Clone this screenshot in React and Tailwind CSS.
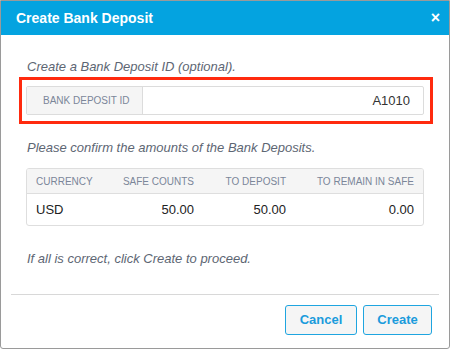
export default function App() {
  const rows = [{ currency: 'USD', safe: '50.00', deposit: '50.00', remain: '0.00' }];

  return (
    <div className="w-[450px] h-[349px] bg-white font-['Liberation_Sans',Arial,sans-serif]">
      <div className="flex flex-col h-full border border-[#9a9a9a] rounded-b-[3px] overflow-hidden">
        <div className="flex items-center justify-between h-[34px] bg-[#04a3e0] pl-[15px] pr-[9px]">
          <h1 className="text-[14px] font-bold text-white">Create Bank Deposit</h1>
          <button className="text-white text-[16px] font-bold leading-none">×</button>
        </div>

        <div className="px-[25px] pt-[24px]">
          <p className="text-[13px] italic text-[#5d6673] leading-[16px] pl-[1px]">Create a Bank Deposit ID (optional).</p>

          <div className="mt-[2px] -ml-[7px] -mr-[9px] border-[3px] border-[#ff2a0e] pt-[6px] pb-[6px] pl-[4px] pr-[6px]">
            <div className="flex h-[29px] border border-[#dcdcdc] rounded-[2px]">
              <div className="flex items-center w-[116px] bg-[#f5f5f5] border-r border-[#dcdcdc] pl-[16px] text-[10px] text-[#7b8699]">
                BANK DEPOSIT ID
              </div>
              <div className="flex-1 flex items-center justify-end pr-[13px] text-[13px] text-[#333]">A1010</div>
            </div>
          </div>

          <p className="mt-[16px] text-[13px] italic text-[#5d6673] leading-[16px] pl-[1px]">Please confirm the amounts of the Bank Deposits.</p>

          <div className="mt-[12px] border border-[#dedede] rounded-[3px] overflow-hidden">
            <div className="grid grid-cols-[1fr_80px_92px_128px] h-[25px] items-center bg-[#f5f5f5] border-b border-[#dedede] px-[9px] text-[10px] text-[#7b8699]">
              <span>CURRENCY</span>
              <span className="text-right">SAFE COUNTS</span>
              <span className="text-right">TO DEPOSIT</span>
              <span className="text-right">TO REMAIN IN SAFE</span>
            </div>
            {rows.map((r) => (
              <div key={r.currency} className="grid grid-cols-[1fr_80px_92px_128px] h-[31px] items-center px-[9px] text-[13px] text-[#222]">
                <span>{r.currency}</span>
                <span className="text-right">{r.safe}</span>
                <span className="text-right">{r.deposit}</span>
                <span className="text-right">{r.remain}</span>
              </div>
            ))}
          </div>

          <p className="mt-[25px] text-[13px] italic text-[#5d6673] leading-[16px] pl-[1px]">If all is correct, click Create to proceed.</p>
        </div>

        <div className="mx-[10px] mt-[27px] border-t border-[#d8d8d8]" />

        <div className="flex justify-end gap-[6px] pt-[10px] pr-[17px]">
          <button className="w-[72px] h-[30px] rounded-[3px] border border-[#1fa5e0] bg-[#f5f5f5] text-[13px] font-bold text-[#1a9bdc]">Cancel</button>
          <button className="w-[69px] h-[30px] rounded-[3px] border border-[#1fa5e0] bg-[#f5f5f5] text-[13px] font-bold text-[#1a9bdc]">Create</button>
        </div>
      </div>
    </div>
  );
}
